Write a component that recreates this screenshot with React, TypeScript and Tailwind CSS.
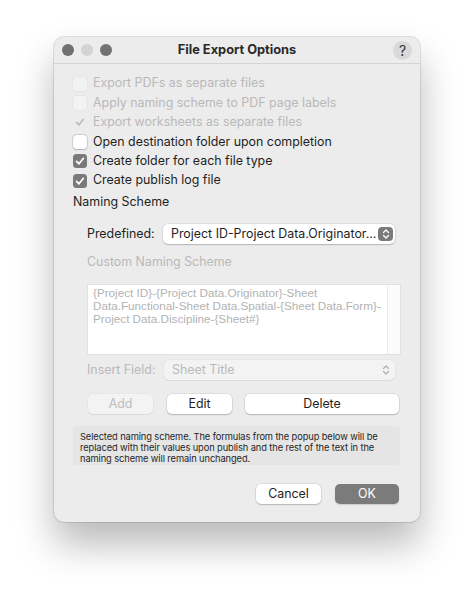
import React from "react";

type CS = "on" | "off" | "disOff" | "disOn";

function CheckMark({ color }: { color: string }) {
  return (
    <svg width="10" height="10" viewBox="0 0 10 10">
      <path
        d="M1.6 5.4 L4 7.8 L8.4 2.3"
        stroke={color}
        strokeWidth="1.7"
        fill="none"
        strokeLinecap="round"
        strokeLinejoin="round"
      />
    </svg>
  );
}

function Box({ s }: { s: CS }) {
  if (s === "on")
    return (
      <span className="w-[14px] h-[14px] rounded-[3.5px] bg-[#7a7a7a] flex items-center justify-center shrink-0">
        <CheckMark color="#ffffff" />
      </span>
    );
  if (s === "off")
    return (
      <span className="w-[14px] h-[14px] rounded-[3.5px] bg-white shadow-[0_0_0_0.5px_rgba(0,0,0,0.18),0_0.5px_1.5px_rgba(0,0,0,0.18)] shrink-0" />
    );
  if (s === "disOn")
    return (
      <span className="w-[14px] h-[14px] rounded-[3.5px] flex items-center justify-center shrink-0">
        <CheckMark color="#bdbdbd" />
      </span>
    );
  return (
    <span className="w-[14px] h-[14px] rounded-[3.5px] bg-[#f2f2f2] shadow-[0_0_0_0.5px_rgba(0,0,0,0.06)] shrink-0" />
  );
}

function Row({ s, label }: { s: CS; label: string }) {
  const dis = s === "disOn" || s === "disOff";
  return (
    <div className="flex items-center h-[19.4px] gap-[6px]">
      <Box s={s} />
      <span className={dis ? "text-[#b9b9b9]" : "text-[#1e1e1e]"}>{label}</span>
    </div>
  );
}

function Chevrons({ color }: { color: string }) {
  return (
    <svg width="8" height="12" viewBox="0 0 8 12">
      <path d="M1.5 4.5 L4 2 L6.5 4.5" stroke={color} strokeWidth="1.3" fill="none" strokeLinecap="round" strokeLinejoin="round" />
      <path d="M1.5 7.5 L4 10 L6.5 7.5" stroke={color} strokeWidth="1.3" fill="none" strokeLinecap="round" strokeLinejoin="round" />
    </svg>
  );
}

const btn =
  "h-[20px] rounded-[5px] bg-white shadow-[0_0_0_0.5px_rgba(0,0,0,0.12),0_1px_1.5px_rgba(0,0,0,0.18)] flex items-center justify-center text-[#1e1e1e]";

export default function App() {
  return (
    <div className="w-[474px] h-[594px] bg-white pt-[37px] pl-[54px] font-['Inter',sans-serif] text-[12.4px] overflow-hidden">
      <div className="w-[366px] h-[485px] rounded-[10px] bg-[#ececec] shadow-[0_22px_38px_rgba(0,0,0,0.28),0_0_0_1px_rgba(0,0,0,0.1)] flex flex-col">
        {/* Title bar */}
        <div className="h-[27px] border-b border-[#d4d4d4] grid grid-cols-[1fr_auto_1fr] items-center pl-[8px] pr-[8px] shrink-0">
          <div className="flex gap-[7px]">
            <span className="w-[12px] h-[12px] rounded-full bg-[#707070]" />
            <span className="w-[12px] h-[12px] rounded-full bg-[#d3d3d3]" />
            <span className="w-[12px] h-[12px] rounded-full bg-[#727272]" />
          </div>
          <div className="text-center font-bold text-[12.8px] text-[#2a2a2a]">File Export Options</div>
          <div className="flex justify-end">
            <span className="w-[19px] h-[19px] rounded-full bg-[#d9d9d9] flex items-center justify-center text-[14px] text-[#333] mt-[1px]">
              ?
            </span>
          </div>
        </div>

        {/* Body */}
        <div className="pl-[19px] pr-[20px] pt-[10px] flex flex-col">
          <Row s="disOff" label="Export PDFs as separate files" />
          <Row s="disOff" label="Apply naming scheme to PDF page labels" />
          <Row s="disOn" label="Export worksheets as separate files" />
          <Row s="off" label="Open destination folder upon completion" />
          <Row s="on" label="Create folder for each file type" />
          <Row s="on" label="Create publish log file" />

          <div className="h-[20px] mt-[2px] flex items-center text-[#1e1e1e]">Naming Scheme</div>

          <div className="h-[20px] mt-[12px] flex items-center pl-[14px] pr-[5px]">
            <span className="w-[76px] shrink-0 text-[#1e1e1e]">Predefined:</span>
            <div className={btn + " flex-1 !justify-between pl-[8px] pr-[2px] h-[19px] whitespace-nowrap"}>
              <span>Project ID-Project Data.Originator...</span>
              <span className="w-[15px] h-[14px] rounded-[4px] bg-[#7a7a7a] flex items-center justify-center">
                <Chevrons color="#ffffff" />
              </span>
            </div>
          </div>

          <div className="h-[20px] mt-[8px] flex items-center pl-[14px] text-[#b9b9b9]">Custom Naming Scheme</div>

          <div className="ml-[15px] mt-[13px] h-[69px] bg-white shadow-[0_0_0_0.5px_rgba(0,0,0,0.1)] flex">
            <div className="flex-1 pl-[5px] pt-[1px] font-['Liberation_Sans',sans-serif] text-[11.7px] leading-[13px] text-[#b3b3b3] whitespace-nowrap">
              {"{Project ID}-{Project Data.Originator}-Sheet"}
              <br />
              {"Data.Functional-Sheet Data.Spatial-{Sheet Data.Form}-"}
              <br />
              {"Project Data.Discipline-{Sheet#}"}
            </div>
            <div className="w-[13px] border-l border-[#ececec] bg-[#fbfbfb]" />
          </div>

          <div className="h-[20px] mt-[6px] flex items-center pl-[14px] pr-[5px]">
            <span className="w-[77px] shrink-0 text-[#b9b9b9]">Insert Field:</span>
            <div className="flex-1 h-[20px] rounded-[5px] bg-[#f3f3f3] shadow-[0_0_0_0.5px_rgba(0,0,0,0.05),0_1px_1px_rgba(0,0,0,0.06)] flex items-center justify-between pl-[8px] pr-[5px] text-[#b9b9b9]">
              <span>Sheet Title</span>
              <Chevrons color="#b0b0b0" />
            </div>
          </div>

          <div className="mt-[14px] ml-[15px] flex">
            <div className="w-[65px] h-[20px] rounded-[5px] bg-[#f3f3f3] shadow-[0_0_0_0.5px_rgba(0,0,0,0.05),0_1px_1px_rgba(0,0,0,0.06)] flex items-center justify-center text-[#bdbdbd]">
              Add
            </div>
            <div className={btn + " w-[65px] ml-[14px]"}>Edit</div>
            <div className={btn + " w-[154px] ml-[13px]"}>Delete</div>
          </div>

          <div className="mt-[12px] h-[39px] rounded-[4px] bg-[#e5e5e5] pl-[7px] pt-[5px] text-[9.3px] leading-[11px] tracking-[-0.1px] text-[#262626] whitespace-nowrap">
            Selected naming scheme. The formulas from the popup below will be
            <br />
            replaced with their values upon publish and the rest of the text in the
            <br />
            naming scheme will remain unchanged.
          </div>

          <div className="mt-[19px] flex justify-end pr-[1px]">
            <div className={btn + " w-[65px]"}>Cancel</div>
            <div className="w-[64px] h-[20px] ml-[14px] rounded-[5px] bg-[#7b7b7b] shadow-[0_1px_1.5px_rgba(0,0,0,0.15)] flex items-center justify-center text-white">
              OK
            </div>
          </div>
        </div>
      </div>
    </div>
  );
}
